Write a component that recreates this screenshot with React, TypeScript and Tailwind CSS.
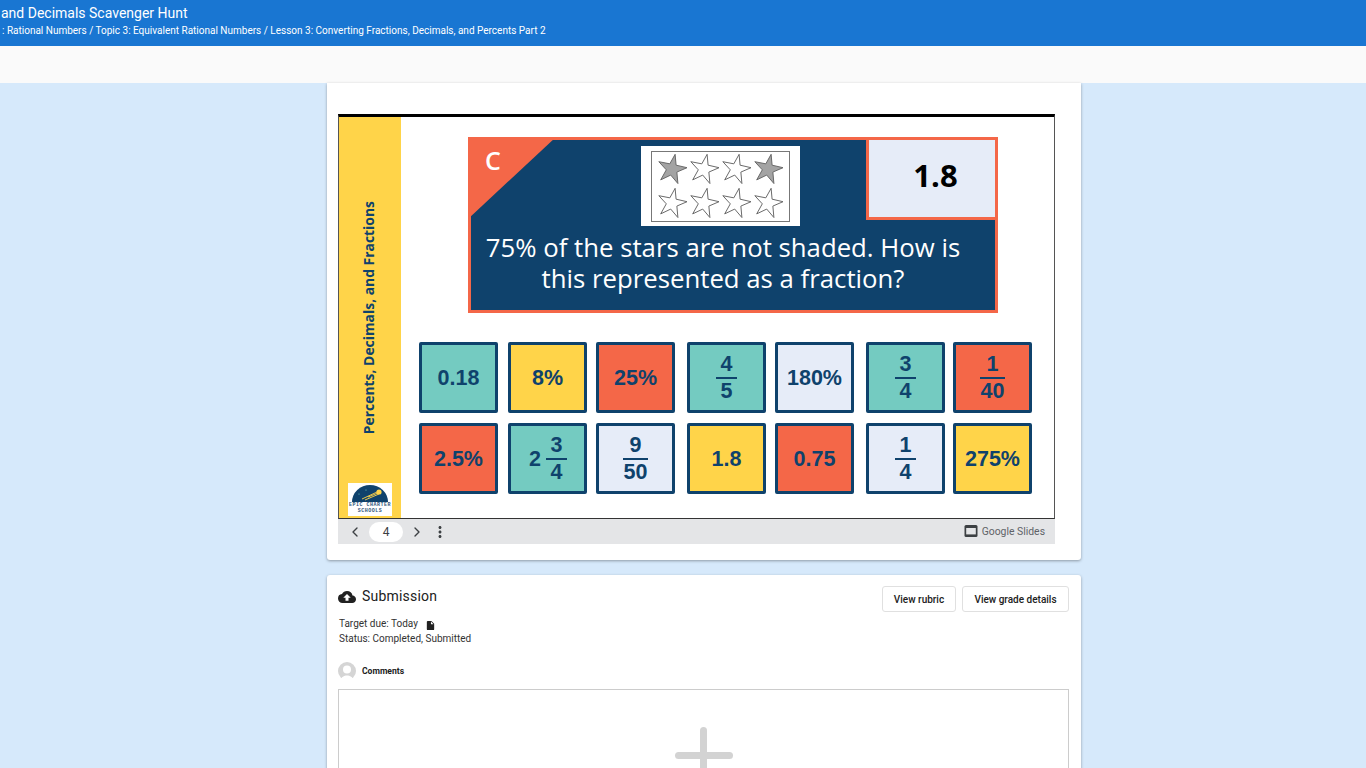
import React from 'react';
import { ChevronLeft, ChevronRight } from 'lucide-react';
import { MdCloudUpload, MdInsertDriveFile, MdMoreVert } from 'react-icons/md';

// thin five point star, tilted like the clip art in the slide
const STAR = 'M0 -15 L3.2 -4.6 L14.4 -4.4 L5.4 2 L8.8 13 L0 6.2 L-8.8 13 L-5.4 2 L-14.4 -4.4 L-3.2 -4.6 Z';
const TOP_X = [31, 63, 95, 127];

const StarsPicture = () => (
  <svg width="159" height="80" viewBox="0 0 159 80" className="block bg-white">
    <rect x="10.5" y="5.5" width="138" height="70" fill="#fff" stroke="#777" strokeWidth="1" />
    {TOP_X.map((x, i) => (
      <path key={x} d={STAR} transform={`translate(${x} 23) rotate(12)`} fill={i === 0 || i === 3 ? '#a3a3a3' : '#fff'} stroke="#666" strokeWidth="0.9" />
    ))}
    {TOP_X.map((x) => (
      <path key={x} d={STAR} transform={`translate(${x} 57) rotate(12)`} fill="#fff" stroke="#666" strokeWidth="0.9" />
    ))}
  </svg>
);

const Logo = () => (
  <div className="w-[44px] h-[33px] bg-white flex flex-col items-center pt-[2px]">
    <svg width="36" height="17" viewBox="0 0 36 17" className="shrink-0">
      <path d="M0 17 A18 17 0 0 1 36 17 Z" fill="#0f426c" />
      <path d="M10 14 L25 7 M13 15 L27 9 M16 12 L26 8" stroke="#ffd449" strokeWidth="0.9" />
      <circle cx="27" cy="7" r="2.6" fill="#ffd449" />
      <circle cx="7" cy="9" r="0.6" fill="#74cbc1" />
      <circle cx="14" cy="5" r="0.6" fill="#74cbc1" />
    </svg>
    <div className="text-[5px] leading-[6px] font-bold text-center text-[#34587c] tracking-[0.5px] whitespace-nowrap font-['Liberation_Mono',monospace]">
      EPIC CHARTER<br />SCHOOLS
    </div>
  </div>
);

type TileData = { bg: string; ml: string; text?: string; whole?: string; num?: string; den?: string };

const row1: TileData[] = [
  { bg: 'bg-[#74cbc1]', ml: '', text: '0.18' },
  { bg: 'bg-[#ffd449]', ml: 'ml-[10px]', text: '8%' },
  { bg: 'bg-[#f46748]', ml: 'ml-[9px]', text: '25%' },
  { bg: 'bg-[#74cbc1]', ml: 'ml-[12px]', num: '4', den: '5' },
  { bg: 'bg-[#e6ecf8]', ml: 'ml-[9px]', text: '180%' },
  { bg: 'bg-[#74cbc1]', ml: 'ml-[12px]', num: '3', den: '4' },
  { bg: 'bg-[#f46748]', ml: 'ml-[8px]', num: '1', den: '40' },
];

const row2: TileData[] = [
  { bg: 'bg-[#f46748]', ml: '', text: '2.5%' },
  { bg: 'bg-[#74cbc1]', ml: 'ml-[10px]', whole: '2', num: '3', den: '4' },
  { bg: 'bg-[#e6ecf8]', ml: 'ml-[9px]', num: '9', den: '50' },
  { bg: 'bg-[#ffd449]', ml: 'ml-[12px]', text: '1.8' },
  { bg: 'bg-[#f46748]', ml: 'ml-[9px]', text: '0.75' },
  { bg: 'bg-[#e6ecf8]', ml: 'ml-[12px]', num: '1', den: '4' },
  { bg: 'bg-[#ffd449]', ml: 'ml-[8px]', text: '275%' },
];

const Tile = ({ t }: { t: TileData }) => (
  <div className={`w-[79px] h-[71px] shrink-0 border-[3px] border-[#0f426c] rounded-[2px] flex items-center justify-center text-[#0f426c] font-bold text-[21.5px] font-['Liberation_Sans',sans-serif] ${t.bg} ${t.ml}`}>
    {t.text && <span className="mt-[1px]">{t.text}</span>}
    {t.whole && <span className="mr-[5px] ml-[1px] mt-[1px]">{t.whole}</span>}
    {t.num && (
      <div className="flex flex-col items-center leading-[25px] mt-[1px]">
        <span>{t.num}</span>
        <span className={`block h-[2px] bg-[#0f426c] self-center ${t.den && t.den.length > 1 ? 'w-[25px]' : 'w-[21px]'}`} />
        <span>{t.den}</span>
      </div>
    )}
  </div>
);

const Slide = () => (
  <div className="w-[717px] border-t-[3px] border-t-black border-x border-x-[#555] border-b border-b-[#333] h-[405px] flex bg-white">
    <div className="w-[62px] shrink-0 bg-[#ffd449] flex flex-col items-center relative">
      <div className="h-[366px] flex items-center justify-center">
        <span className="[writing-mode:vertical-rl] rotate-180 text-[#0f426c] font-bold text-[13.9px] whitespace-nowrap font-['Open_Sans',sans-serif] mt-[35px] mr-[1px]">
          Percents, Decimals, and Fractions
        </span>
      </div>
      <Logo />
    </div>
    <div className="flex-1 pl-[18px]">
      <div className="ml-[49px] mt-[20px] w-[530px] h-[176px] relative border-[3px] border-[#f46748] bg-[#0f426c] flex flex-col items-center pt-[6px]">
        <svg width="88" height="82" viewBox="0 0 88 82" className="absolute -left-[3px] -top-[3px]">
          <polygon points="0,0 88,0 0,82" fill="#f46748" />
        </svg>
        <span className="absolute left-[14px] top-[4px] text-white font-semibold text-[25px] leading-[32px] font-['Open_Sans',sans-serif]">C</span>
        <div className="absolute -right-[3px] -top-[3px] w-[132px] h-[83px] bg-[#e6ecf8] border-[3px] border-[#f46748] flex items-center justify-center pb-[7px] text-black font-bold text-[31px] font-['Open_Sans',sans-serif] pl-[7px]">
          1.8
        </div>
        <div className="mr-[25px]">
          <StarsPicture />
        </div>
        <p className="text-white text-[25.75px] leading-[31px] text-center mt-[6px] w-[500px] mr-[20px] font-['Open_Sans',sans-serif]">
          75% of the stars are not shaded. How is this represented as a fraction?
        </p>
      </div>
      <div className="flex mt-[29px]">
        {row1.map((t, i) => <Tile key={i} t={t} />)}
      </div>
      <div className="flex mt-[10px]">
        {row2.map((t, i) => <Tile key={i} t={t} />)}
      </div>
    </div>
  </div>
);

const SlidesBar = () => (
  <div className="w-[717px] h-[25px] bg-[#e4e5e7] flex items-center pl-[9px] pr-[10px] text-[#3c4043]">
    <ChevronLeft size={16} strokeWidth={2} />
    <div className="ml-[6px] w-[34px] h-[20px] bg-white rounded-full flex items-center justify-center text-[12px]">4</div>
    <ChevronRight size={16} strokeWidth={2} className="ml-[6px]" />
    <MdMoreVert size={18} className="ml-[6px]" />
    <div className="ml-auto flex items-center gap-[4px] text-[10.4px] text-[#5f6368] font-['Roboto',sans-serif]">
      <svg width="14" height="14" viewBox="0 0 14 14">
        <rect x="0.5" y="1" width="13" height="12" rx="1.5" fill="#3c4043" />
        <rect x="2.2" y="4" width="9.6" height="6.4" fill="#e4e5e7" />
      </svg>
      Google Slides
    </div>
  </div>
);

const Avatar = () => (
  <svg width="18" height="18" viewBox="0 0 18 18">
    <circle cx="9" cy="9" r="9" fill="#d5d5d5" />
    <circle cx="9" cy="7.5" r="4" fill="#fff" />
    <path d="M3 18 C3 12 15 12 15 18 Z" fill="#fff" />
  </svg>
);

export default function App() {
  return (
    <div className="h-screen overflow-hidden bg-[#d6e9fb] font-['Roboto',sans-serif]">
      <header className="h-[46px] bg-[#1976d2] text-white overflow-hidden pt-[4px] whitespace-nowrap">
        <div className="text-[14px] leading-[18px] pl-[1px]">and Decimals Scavenger Hunt</div>
        <div className="text-[10px] leading-[14px] mt-[2px] pl-[2px]">
          : Rational Numbers / Topic 3: Equivalent Rational Numbers / Lesson 3: Converting Fractions, Decimals, and Percents Part 2
        </div>
      </header>
      <div className="h-[37px] bg-[#fafafa]" />

      <main className="w-[754px] ml-[327px]">
        <section className="bg-white rounded-b-[3px] shadow-[0_1px_3px_rgba(0,0,0,0.35)] pt-[31px] pb-[16px] pl-[11px]">
          <Slide />
          <SlidesBar />
        </section>

        <section className="mt-[15px] bg-white rounded-t-[3px] shadow-[0_1px_3px_rgba(0,0,0,0.35)] pl-[11px] pr-[12px] pt-[11px] h-[300px]">
          <div className="flex items-start justify-between">
            <div className="flex items-center text-[#212121] -mt-[1px]">
              <MdCloudUpload size={18} className="mt-[3px]" />
              <span className="ml-[6px] text-[14px] leading-[20px] font-normal tracking-[0.2px]">Submission</span>
            </div>
            <div className="flex gap-[6px]">
              <button className="h-[26px] w-[74px] bg-white border border-[#e0e0e0] rounded-[3px] text-[10px] font-medium text-[#212121]">View rubric</button>
              <button className="h-[26px] w-[107px] bg-white border border-[#e0e0e0] rounded-[3px] text-[10px] font-medium text-[#212121]">View grade details</button>
            </div>
          </div>
          <div className="text-[10px] leading-[15px] text-[#333] mt-[4px] pl-[1px]">
            <div className="flex items-center">
              Target due: Today
              <MdInsertDriveFile size={11} className="ml-[7px] mt-[3px] text-[#212121]" />
            </div>
            <div>Status: Completed, Submitted</div>
          </div>
          <div className="flex items-center mt-[16px]">
            <Avatar />
            <span className="ml-[6px] text-[8.6px] font-bold text-[#212121]">Comments</span>
          </div>
          <div className="mt-[9px] w-[731px] h-[200px] border border-[#ccc] border-b-0 flex justify-center pt-[37px]">
            <div className="w-[58px] h-[58px] relative">
              <div className="absolute left-[25px] top-0 w-[7px] h-[58px] rounded-full bg-[#d3d3d3]" />
              <div className="absolute top-[25px] left-0 h-[7px] w-[58px] rounded-full bg-[#d3d3d3]" />
            </div>
          </div>
        </section>
      </main>
    </div>
  );
}
